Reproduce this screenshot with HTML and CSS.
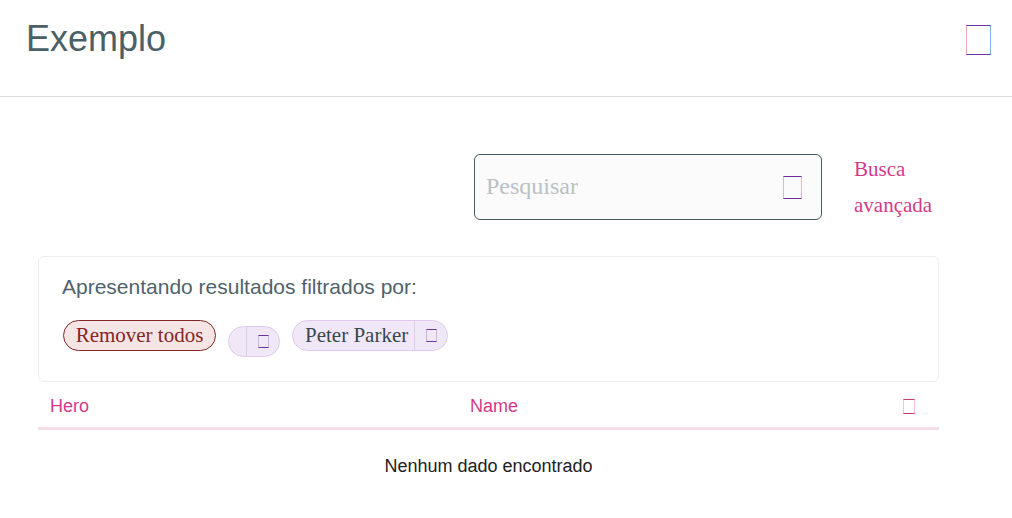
FILE: index.html
```html
<!DOCTYPE html>
<html lang="pt-BR">
<head>
    <meta charset="UTF-8">
    <meta name="viewport" content="width=device-width, initial-scale=1.0">
    <title>Exemplo</title>
    <link rel="stylesheet" href="styles.css">
</head>
<body>
    <header class="page-header">
        <h1 class="page-title">Exemplo</h1>
        <span class="icon icon-menu"></span>
    </header>

    <main class="content">
        <div class="search-row">
            <form class="search-box">
                <input class="search-input" type="text" placeholder="Pesquisar">
                <span class="icon icon-search"></span>
            </form>
            <a class="search-link" href="#">Busca avançada</a>
        </div>

        <section class="filters">
            <p class="filters-title">Apresentando resultados filtrados por:</p>
            <div class="chips">
                <button class="chip-clear" type="button">Remover todos</button>
                <div class="chip chip-empty">
                    <span class="chip-label"></span>
                    <span class="chip-close"><span class="icon icon-chip"></span></span>
                </div>
                <div class="chip">
                    <span class="chip-label">Peter Parker</span>
                    <span class="chip-close"><span class="icon icon-chip"></span></span>
                </div>
            </div>
        </section>

        <table class="results">
            <thead>
                <tr>
                    <th class="col-hero">Hero</th>
                    <th class="col-name">Name</th>
                    <th class="col-action"><span class="icon icon-table"></span></th>
                </tr>
            </thead>
            <tbody>
                <tr>
                    <td class="no-data" colspan="3">Nenhum dado encontrado</td>
                </tr>
            </tbody>
        </table>
    </main>
</body>
</html>
```

FILE: styles.css
```css
body {
    font-family: "Liberation Sans", Arial, sans-serif;
    margin: 0;
    padding: 0;
    background: #fff;
}

.page-header {
    display: flex;
    justify-content: space-between;
    align-items: flex-start;
    height: 96px;
    padding: 0 21px 0 26px;
    border-bottom: 1px solid #ddd;
}

.page-title {
    margin: 18px 0 0;
    font-size: 36px;
    line-height: 41px;
    font-weight: normal;
    color: #4b5f66;
}

.icon {
    display: block;
    box-sizing: border-box;
    border-style: solid;
    border-width: 1px;
}

.icon-menu {
    width: 25px;
    height: 30px;
    margin-top: 25px;
    border-color: #7430a8 #7fb0f5 #7430a8 #eeaaaa;
}

.icon-search {
    width: 19px;
    height: 23px;
    margin-top: 1px;
    border-color: #6a2a9a #d0bce0;
}

.icon-chip {
    width: 11px;
    height: 13px;
    border-color: #6a35a0 #cbb4dd;
}

.icon-table {
    width: 12px;
    height: 15px;
    margin-left: auto;
    border-color: #c93a78 #f3c3da;
}

.content {
    width: 901px;
    margin-left: 38px;
    padding-top: 54px;
}

.search-row {
    display: flex;
    justify-content: flex-end;
    align-items: center;
}

.search-box {
    display: flex;
    align-items: center;
    box-sizing: border-box;
    width: 348px;
    height: 66px;
    padding: 0 19px 0 11px;
    border: 1px solid #455a64;
    border-radius: 6px;
    background: #fbfbfb;
}

.search-input {
    flex: 1;
    min-width: 0;
    padding: 0 0 2px;
    border: none;
    outline: none;
    background: transparent;
    font-family: "Liberation Serif", "Times New Roman", serif;
    font-size: 24px;
    color: #455a64;
}

.search-input::placeholder {
    color: #b9c1c4;
    opacity: 1;
}

.search-link {
    width: 85px;
    margin-left: 32px;
    font-family: "Liberation Serif", "Times New Roman", serif;
    font-size: 21px;
    line-height: 36px;
    color: #d43a87;
    text-decoration: none;
}

.filters {
    box-sizing: border-box;
    height: 126px;
    margin-top: 33px;
    padding: 15px 23px 0;
    border: 1px solid #eee;
    border-radius: 6px;
}

.filters-title {
    margin: 0;
    font-size: 21px;
    line-height: 30px;
    color: #4f626b;
}

.chips {
    display: flex;
    align-items: flex-start;
    gap: 12px;
    margin-top: 18px;
    padding-left: 1px;
    font-family: "Liberation Serif", "Times New Roman", serif;
    font-size: 21px;
}

.chip-clear {
    box-sizing: border-box;
    width: 153px;
    height: 31px;
    padding: 0;
    border: 1px solid #842626;
    border-radius: 16px;
    background: #f6e5e5;
    font: inherit;
    color: #842626;
}

.chip {
    display: flex;
    box-sizing: border-box;
    height: 31px;
    border: 1px solid #e0c9ee;
    border-radius: 16px;
    background: #f1e8f7;
    color: #37474f;
}

.chip-empty {
    margin-top: 6px;
}

.chip-label {
    min-width: 17px;
    padding-left: 12px;
    padding-right: 6px;
    box-sizing: border-box;
    line-height: 29px;
}

.chip-empty .chip-label {
    padding: 0;
}

.chip-close {
    display: flex;
    justify-content: center;
    align-items: center;
    box-sizing: border-box;
    width: 33px;
    border-left: 1px solid #e0c9ee;
}

.results {
    width: 100%;
    border-collapse: collapse;
    table-layout: fixed;
}

.results th {
    height: 41px;
    padding: 4px 12px 0;
    border-bottom: 3px solid #f5dde8;
    box-sizing: content-box;
    font-size: 18px;
    font-weight: normal;
    text-align: left;
    color: #d43a87;
}

.col-hero,
.col-name {
    width: 396px;
}

.results th.col-action {
    padding-right: 24px;
}

.no-data {
    height: 72px;
    padding: 0;
    font-size: 18px;
    text-align: center;
    color: #212121;
}
```
